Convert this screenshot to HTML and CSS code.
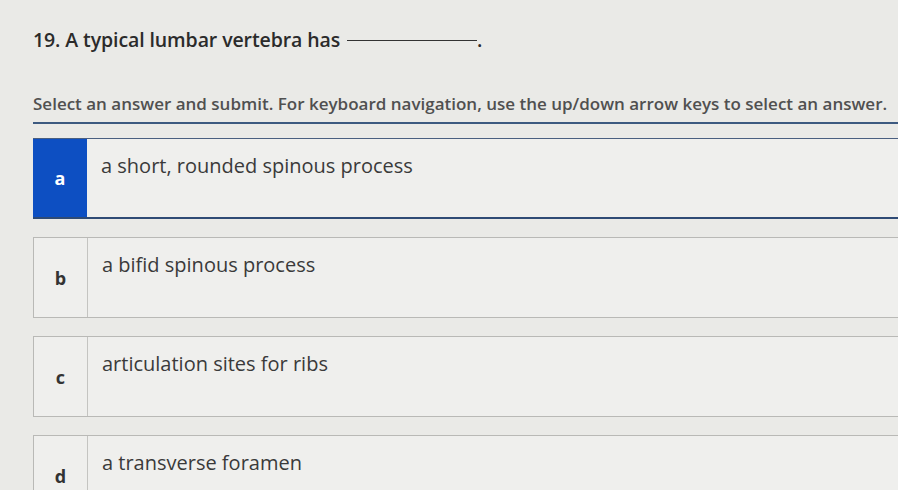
FILE: index.html
```html
<!DOCTYPE html>
<html lang="en">
<head>
  <meta charset="UTF-8" />
  <meta name="viewport" content="width=device-width, initial-scale=1.0"/>
  <title>Question 19</title>
  <link rel="stylesheet" href="styles.css">
</head>
<body>
  <main class="question">
    <h2 class="prompt">19. A typical lumbar vertebra has <span class="blank"></span>.</h2>

    <p class="hint">Select an answer and submit. For keyboard navigation, use the up/down arrow keys to select an answer.</p>

    <ul class="choices">
      <li class="choice selected">
        <span class="key">a</span>
        <span class="label">a short, rounded spinous process</span>
      </li>
      <li class="choice">
        <span class="key">b</span>
        <span class="label">a bifid spinous process</span>
      </li>
      <li class="choice">
        <span class="key">c</span>
        <span class="label">articulation sites for ribs</span>
      </li>
      <li class="choice">
        <span class="key">d</span>
        <span class="label">a transverse foramen</span>
      </li>
    </ul>
  </main>
</body>
</html>
```

FILE: styles.css
```css
* { box-sizing: border-box; margin: 0; padding: 0; }
html, body {
  height: 100%;
  overflow: hidden;
}
body {
  background: #eaeae7;
  color: #333;
  font-family: 'Open Sans', 'Noto Sans', sans-serif;
}
.question {
  padding: 26px 0 0 33px;
  width: 940px;
}
.prompt {
  font-size: 19.5px;
  font-weight: 600;
  color: #2b2b2b;
  line-height: 28px;
  letter-spacing: -0.1px;
}
.blank {
  display: inline-block;
  width: 130px;
  margin-left: 2px;
  border-bottom: 1.5px solid #333;
  vertical-align: 6px;
}
.hint {
  margin-top: 38px;
  font-size: 17px;
  font-weight: 600;
  color: #505050;
  line-height: 24px;
  padding-bottom: 6px;
  border-bottom: 2px solid #3d5a80;
}
.choices {
  list-style: none;
  margin-top: 14px;
  display: flex;
  flex-direction: column;
  gap: 18px;
}
.choice {
  display: flex;
  height: 81px;
  background: #efefed;
  border: 1px solid #b9b9b6;
}
.choice .key {
  width: 54px;
  display: flex;
  align-items: center;
  justify-content: center;
  font-size: 18px;
  font-weight: 700;
  color: #333;
  border-right: 1px solid #c4c4c1;
}
.choice .label {
  padding: 13px 0 0 14px;
  font-size: 20px;
  color: #3a3a3a;
  line-height: 28px;
}
.choice.selected {
  border: none;
  border-top: 1px solid #4a5f80;
  border-bottom: 2px solid #2f4b75;
}
.choice.selected .key {
  background: #0d4fc2;
  color: #fff;
  border-right: none;
}
```
